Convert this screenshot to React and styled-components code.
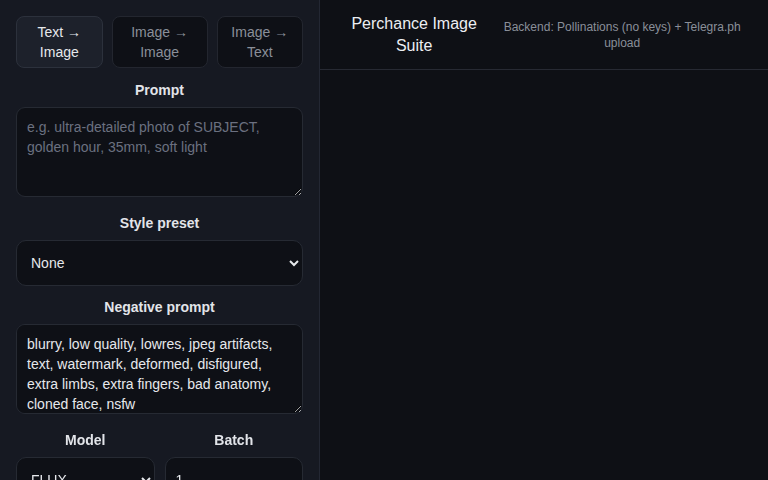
import React, { useState } from 'react';
import styled, { createGlobalStyle } from 'styled-components';

const GlobalStyle = createGlobalStyle`
  html, body {
    margin: 0;
    padding: 0;
    background: #0e1015;
    font-family: "Liberation Sans", Arial, sans-serif;
    color: #e6e8ec;
  }
  * { box-sizing: border-box; }
`;

const Layout = styled.div`
  display: grid;
  grid-template-columns: 320px 1fr;
  height: 480px;
  overflow: hidden;
`;

const Sidebar = styled.aside`
  background: #161922;
  border-right: 1px solid #232733;
  padding: 16px;
  display: flex;
  flex-direction: column;
  gap: 12px;
  overflow: hidden;
`;

const Tabs = styled.div`
  display: flex;
  gap: 9px;
  margin-bottom: 1px;
`;

const Tab = styled.button`
  flex: 1 1 auto;
  height: 52px;
  padding: 0 12px;
  border-radius: 8px;
  border: 1px solid ${(p) => (p.$active ? '#2c313c' : '#23262f')};
  background: ${(p) => (p.$active ? '#1d212b' : '#0e1016')};
  color: ${(p) => (p.$active ? '#e6e8ec' : '#8a8f99')};
  font-family: inherit;
  font-size: 14px;
  line-height: 20px;
  cursor: pointer;
`;

const Field = styled.div`
  display: flex;
  flex-direction: column;
  gap: 8px;
  min-width: 0;
`;

const Label = styled.label`
  text-align: center;
  font-size: 14px;
  line-height: 18px;
  font-weight: 700;
  color: #e2e4e9;
`;

const TextArea = styled.textarea`
  display: block;
  width: 100%;
  height: 90px;
  margin-bottom: 5px;
  padding: 9px 10px;
  border-radius: 9px;
  border: 1px solid #262a33;
  background: #0e1016;
  color: #e6e8ec;
  font-family: inherit;
  font-size: 14px;
  line-height: 20px;
  resize: vertical;
  outline: none;

  &::placeholder {
    color: #6b7080;
  }
`;

const Select = styled.select`
  width: 100%;
  height: 46px;
  padding: 0 10px;
  border-radius: 10px;
  border: 1px solid #262a33;
  background: #0e1016;
  color: #e6e8ec;
  font-family: inherit;
  font-size: 14px;
  outline: none;
`;

const Input = styled.input`
  width: 100%;
  height: 46px;
  padding: 0 10px;
  border-radius: 10px;
  border: 1px solid #262a33;
  background: #0e1016;
  color: #e6e8ec;
  font-family: inherit;
  font-size: 14px;
  outline: none;
`;

const Row = styled.div`
  display: grid;
  grid-template-columns: 1fr 1fr;
  gap: 10px;
`;

const Main = styled.main`
  display: flex;
  flex-direction: column;
  background: #0e1015;
`;

const Header = styled.header`
  display: flex;
  align-items: center;
  gap: 16px;
  height: 70px;
  padding: 0 26px 0 22px;
  border-bottom: 1px solid #272a33;
`;

const Title = styled.h1`
  margin: 0;
  text-align: center;
  font-size: 16px;
  line-height: 22px;
  font-weight: 500;
  color: #eceef2;
`;

const Subtitle = styled.div`
  text-align: center;
  font-size: 12px;
  line-height: 16px;
  color: #8a8f99;
`;

const tabs = [
  { id: 't2i', label: 'Text → Image' },
  { id: 'i2i', label: 'Image → Image' },
  { id: 'i2t', label: 'Image → Text' },
];

export default function App() {
  const [mode, setMode] = useState('t2i');
  const [negative, setNegative] = useState(
    'blurry, low quality, lowres, jpeg artifacts, text, watermark, deformed, disfigured, extra limbs, extra fingers, bad anatomy, cloned face, nsfw'
  );

  return (
    <Layout>
      <GlobalStyle />
      <Sidebar>
        <Tabs>
          {tabs.map((t) => (
            <Tab key={t.id} $active={mode === t.id} onClick={() => setMode(t.id)}>
              {t.label}
            </Tab>
          ))}
        </Tabs>
        <Field>
          <Label>Prompt</Label>
          <TextArea placeholder="e.g. ultra-detailed photo of SUBJECT, golden hour, 35mm, soft light" />
        </Field>
        <Field>
          <Label>Style preset</Label>
          <Select defaultValue="none">
            <option value="none">None</option>
            <option value="photo">Photographic</option>
            <option value="anime">Anime</option>
          </Select>
        </Field>
        <Field>
          <Label>Negative prompt</Label>
          <TextArea value={negative} onChange={(e) => setNegative(e.target.value)} />
        </Field>
        <Row>
          <Field>
            <Label>Model</Label>
            <Select defaultValue="flux">
              <option value="flux">FLUX</option>
              <option value="turbo">Turbo</option>
            </Select>
          </Field>
          <Field>
            <Label>Batch</Label>
            <Input type="number" defaultValue={1} />
          </Field>
        </Row>
      </Sidebar>
      <Main>
        <Header>
          <Title>Perchance Image Suite</Title>
          <Subtitle>Backend: Pollinations (no keys) + Telegra.ph upload</Subtitle>
        </Header>
      </Main>
    </Layout>
  );
}
